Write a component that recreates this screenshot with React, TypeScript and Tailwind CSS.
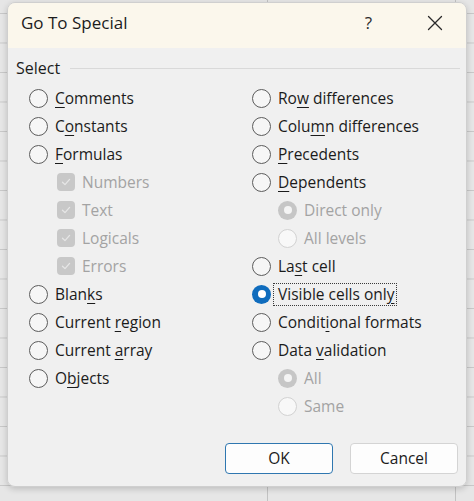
import React from "react";

type Item = {
  label: string;
  k?: number;
  kind: "radio" | "check";
  checked?: boolean;
  disabled?: boolean;
  sub?: boolean;
  focus?: boolean;
};

const left: Item[] = [
  { label: "Comments", k: 0, kind: "radio" },
  { label: "Constants", k: 1, kind: "radio" },
  { label: "Formulas", k: 0, kind: "radio" },
  { label: "Numbers", kind: "check", checked: true, disabled: true, sub: true },
  { label: "Text", kind: "check", checked: true, disabled: true, sub: true },
  { label: "Logicals", kind: "check", checked: true, disabled: true, sub: true },
  { label: "Errors", kind: "check", checked: true, disabled: true, sub: true },
  { label: "Blanks", k: 4, kind: "radio" },
  { label: "Current region", k: 8, kind: "radio" },
  { label: "Current array", k: 8, kind: "radio" },
  { label: "Objects", k: 1, kind: "radio" },
];

const right: Item[] = [
  { label: "Row differences", k: 2, kind: "radio" },
  { label: "Column differences", k: 4, kind: "radio" },
  { label: "Precedents", k: 0, kind: "radio" },
  { label: "Dependents", k: 0, kind: "radio" },
  { label: "Direct only", kind: "radio", checked: true, disabled: true, sub: true },
  { label: "All levels", kind: "radio", disabled: true, sub: true },
  { label: "Last cell", k: 2, kind: "radio" },
  { label: "Visible cells only", k: 17, kind: "radio", checked: true, focus: true },
  { label: "Conditional formats", k: 6, kind: "radio" },
  { label: "Data validation", k: 5, kind: "radio" },
  { label: "All", kind: "radio", checked: true, disabled: true, sub: true },
  { label: "Same", kind: "radio", disabled: true, sub: true },
];

function Radio({ checked, disabled }: { checked?: boolean; disabled?: boolean }) {
  if (checked && !disabled) {
    return (
      <div className="w-[19px] h-[19px] rounded-full bg-[#0f6cbd] flex items-center justify-center shrink-0">
        <div className="w-[8px] h-[8px] rounded-full bg-white" />
      </div>
    );
  }
  if (checked && disabled) {
    return (
      <div className="w-[19px] h-[19px] rounded-full bg-[#c6c6c6] flex items-center justify-center shrink-0">
        <div className="w-[8px] h-[8px] rounded-full bg-[#f4f4f4]" />
      </div>
    );
  }
  return (
    <div
      className={
        disabled
          ? "w-[19px] h-[19px] rounded-full border-[1.5px] border-[#d2d2d2] bg-[#f8f8f8] shrink-0"
          : "w-[19px] h-[19px] rounded-full border-[1.5px] border-[#5c5c5c] bg-[#f6f6f6] shrink-0"
      }
    />
  );
}

function Check() {
  return (
    <div className="w-[18px] h-[18px] rounded-[4px] bg-[#c8c8c8] flex items-center justify-center shrink-0">
      <svg width="12" height="12" viewBox="0 0 12 12" fill="none">
        <path d="M2.5 6.2 L5 8.6 L9.6 3.4" stroke="#e6e6e6" strokeWidth="1.3" strokeLinecap="round" strokeLinejoin="round" />
      </svg>
    </div>
  );
}

function Label({ text, k }: { text: string; k?: number }) {
  if (k === undefined) return <>{text}</>;
  return (
    <>
      {text.slice(0, k)}
      <span className="underline underline-offset-[3px] decoration-[1px]">{text[k]}</span>
      {text.slice(k + 1)}
    </>
  );
}

function Row({ item, indent }: { item: Item; indent: string }) {
  const color = item.disabled ? "text-[#a3a3a3]" : "text-[#1b1b1b]";
  return (
    <div className={`h-[28px] flex items-center ${item.sub ? indent : ""}`}>
      {item.kind === "radio" ? <Radio checked={item.checked} disabled={item.disabled} /> : <Check />}
      {item.focus ? (
        <span className={`ml-[2px] pl-[4px] pr-[2px] leading-[21px] border border-dotted border-[#3a3a3a] ${color}`}>
          <Label text={item.label} k={item.k} />
        </span>
      ) : (
        <span className={`ml-[7px] leading-[20px] ${color}`}>
          <Label text={item.label} k={item.k} />
        </span>
      )}
    </div>
  );
}

export default function App() {
  return (
    <div
      className="w-[474px] h-[501px] overflow-hidden bg-[#e6e6e6] pt-[2px] pl-[7px] [background-image:linear-gradient(to_right,#c2c2c2_1px,transparent_1px),linear-gradient(to_bottom,#c8c8c8_1px,transparent_1px)] [background-size:94px_29.5px] [background-position:79px_13px]"
      style={{ fontFamily: '"Open Sans", "Noto Sans", sans-serif' }}
    >
      <div className="w-[460px] h-[485px] rounded-[8px] overflow-hidden flex flex-col border border-[#cfcfcf] shadow-[0_2px_6px_rgba(0,0,0,0.18)]">
        {/* Title bar */}
        <div className="h-[45px] bg-[#fbf7ec] flex items-center pl-[13px] pb-[5px] shrink-0">
          <span className="text-[17px] text-[#1c1c1c]">Go To Special</span>
          <span className="ml-auto text-[17px] text-[#2a2a2a]">?</span>
          <div className="ml-[55px] mr-[23px] w-[16px] h-[16px] flex items-center justify-center">
            <svg width="16" height="16" viewBox="0 0 16 16" fill="none">
              <path d="M1.5 1.5 L14.5 14.5 M14.5 1.5 L1.5 14.5" stroke="#2a2a2a" strokeWidth="1.3" strokeLinecap="round" />
            </svg>
          </div>
        </div>

        {/* Body */}
        <div className="flex-1 bg-[#f0f0f0] flex flex-col text-[15.5px]">
          <div className="flex items-center mt-[9px] pl-[8px] pr-[6px]">
            <span className="text-[16px] text-[#1c1c1c] leading-[22px]">Select</span>
            <div className="flex-1 h-px bg-[#d9d9d9] ml-[10px]" />
          </div>

          <div className="flex mt-[5px]">
            <div className="w-[244px] pl-[21px] flex flex-col">
              {left.map((it) => (
                <Row key={it.label} item={it} indent="ml-[28px]" />
              ))}
            </div>
            <div className="flex flex-col">
              {right.map((it) => (
                <Row key={it.label} item={it} indent="ml-[26px]" />
              ))}
            </div>
          </div>

          <div className="mt-auto flex justify-end gap-[17px] pr-[8px] pb-[12px]">
            <button className="w-[108px] h-[31px] rounded-[4px] bg-[#fdfdfd] border-[1.5px] border-[#2f77b0] text-[15.5px] text-[#1b1b1b]">
              OK
            </button>
            <button className="w-[108px] h-[31px] rounded-[4px] bg-[#fdfdfd] border border-[#d4d4d4] text-[15.5px] text-[#1b1b1b]">
              Cancel
            </button>
          </div>
        </div>
      </div>
    </div>
  );
}
